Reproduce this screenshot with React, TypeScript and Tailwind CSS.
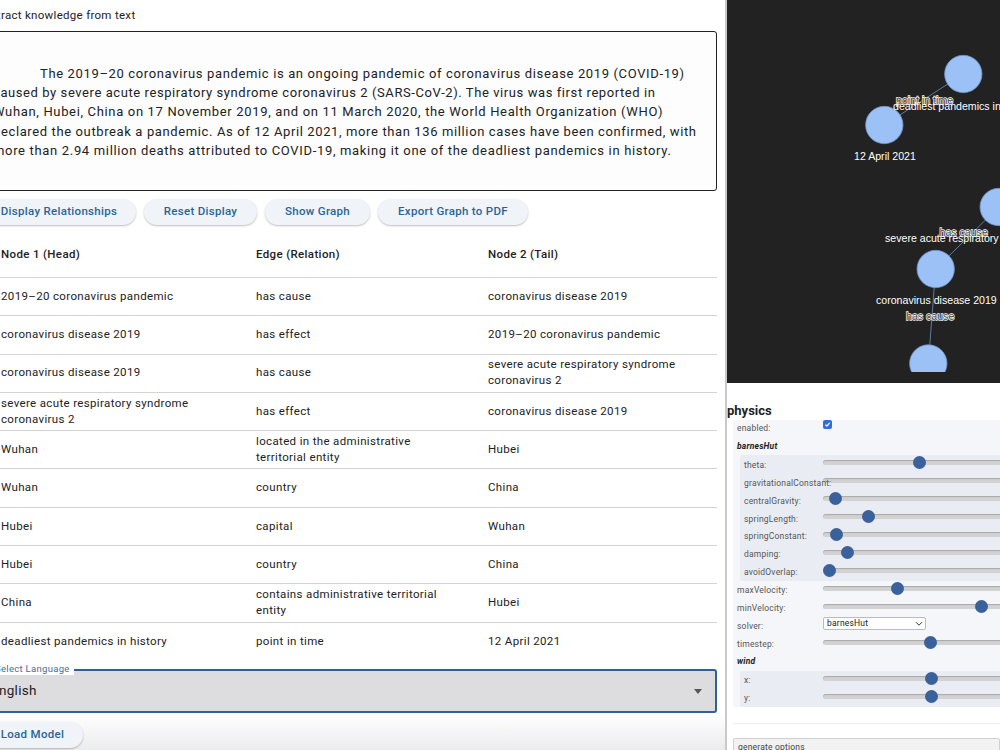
import React from "react";

const rows: [React.ReactNode, React.ReactNode, React.ReactNode][] = [
  ["2019–20 coronavirus pandemic", "has cause", "coronavirus disease 2019"],
  ["coronavirus disease 2019", "has effect", "2019–20 coronavirus pandemic"],
  ["coronavirus disease 2019", "has cause", <>severe acute respiratory syndrome<br />coronavirus 2</>],
  [<>severe acute respiratory syndrome<br />coronavirus 2</>, "has effect", "coronavirus disease 2019"],
  ["Wuhan", <>located in the administrative<br />territorial entity</>, "Hubei"],
  ["Wuhan", "country", "China"],
  ["Hubei", "capital", "Wuhan"],
  ["Hubei", "country", "China"],
  ["China", <>contains administrative territorial<br />entity</>, "Hubei"],
  ["deadliest pandemics in history", "point in time", "12 April 2021"],
];

function Btn({ children, w }: { children: React.ReactNode; w: string }) {
  return (
    <button className={`h-[26px] ${w} shrink-0 rounded-[13px] bg-[#f0f4f8] text-[11.5px] font-medium tracking-[0.3px] text-[#2a6496] shadow-[0_1px_2px_rgba(0,0,0,0.25)]`}>
      {children}
    </button>
  );
}

function Slider({ label, pos, w = "w-[79px]" }: { label: string; pos?: number; w?: string }) {
  return (
    <div className="flex h-[17.97px] items-center">
      <span className={`relative z-10 ${w} shrink-0 translate-y-[1px] whitespace-nowrap text-[8.5px] tracking-[0.2px] text-[#555]`}>{label}</span>
      <div className="relative h-[5px] w-[240px] shrink-0 -translate-y-[1px] rounded-full bg-[#d2d2d2] shadow-[inset_0_1px_1px_rgba(0,0,0,0.2)]">
        {pos !== undefined && (
          <div
            className="absolute top-[-4px] h-[13px] w-[13px] rounded-full bg-[#3b619b]"
            style={{ left: pos - 823 - 6.5 }}
          />
        )}
      </div>
    </div>
  );
}

function Graph() {
  const outlined = "[paint-order:stroke] stroke-white stroke-[1.3px] fill-[#444444]";
  const white = "fill-white";
  const nodes = [
    [963.3, 74],
    [884.3, 125],
    [998.7, 207],
    [935.7, 269],
    [928.3, 363.5],
  ];
  return (
    <svg width="273" height="372" viewBox="727 0 273 372" className="block" fontFamily="'Liberation Sans', Arial, sans-serif" fontSize="10.6">
      <g stroke="#5b7ba3" strokeWidth="1">
        <line x1="963.3" y1="74" x2="884.3" y2="125" />
        <line x1="998.7" y1="207" x2="935.7" y2="269" />
        <line x1="935.7" y1="269" x2="928.3" y2="363.5" />
      </g>
      {nodes.map(([x, y]) => (
        <circle key={x} cx={x} cy={y} r="18.7" fill="#9bc1f6" stroke="#6d8fbf" strokeWidth="0.8" />
      ))}
      <text x="896" y="103.5" className={outlined}>point in time</text>
      <text x="893" y="110" className={white}>deadliest pandemics in history</text>
      <text x="854" y="160" className={white}>12 April 2021</text>
      <text x="939.5" y="236" className={outlined}>has cause</text>
      <text x="885" y="242" className={white}>severe acute respiratory syndrome</text>
      <text x="876" y="304" className={white}>coronavirus disease 2019</text>
      <text x="906" y="319.5" className={outlined}>has cause</text>
    </svg>
  );
}

export default function App() {
  return (
    <div className="flex h-[750px] w-[1000px] overflow-hidden bg-white font-['Roboto','Liberation_Sans',sans-serif]">
      {/* left column */}
      <div className="h-[750px] w-[725px] shrink-0 overflow-hidden bg-gradient-to-b from-white from-[95%] to-[#ececee] pr-[8px]">
        <div className="-ml-[16px] flex w-[733px] flex-col">
          <p className="mt-[8px] h-[23px] text-[11.5px] leading-[15px] tracking-[0.3px] text-[#222]">Extract knowledge from text</p>
          <div className="h-[160px] rounded-[3px] border border-[#222] bg-[#fdfdfe] pl-[8px] pt-[32px] text-[13px] leading-[19.2px] text-[#222] whitespace-nowrap">
            <div className="pl-[47px] tracking-[0.64px]">The 2019–20 coronavirus pandemic is an ongoing pandemic of coronavirus disease 2019 (COVID-19)</div>
            <div className="tracking-[0.58px]">caused by severe acute respiratory syndrome coronavirus 2 (SARS-CoV-2). The virus was first reported in</div>
            <div className="tracking-[0.66px]">Wuhan, Hubei, China on 17 November 2019, and on 11 March 2020, the World Health Organization (WHO)</div>
            <div className="tracking-[0.62px]">declared the outbreak a pandemic. As of 12 April 2021, more than 136 million cases have been confirmed, with</div>
            <div className="tracking-[0.67px]">more than 2.94 million deaths attributed to COVID-19, making it one of the deadliest pandemics in history.</div>
          </div>
          <div className="ml-[-2px] mt-[8px] flex gap-[8px]">
            <Btn w="w-[154px]">Display Relationships</Btn>
            <Btn w="w-[113px]">Reset Display</Btn>
            <Btn w="w-[105px]">Show Graph</Btn>
            <Btn w="w-[150px]">Export Graph to PDF</Btn>
          </div>
          <div className="mt-[7px] pl-[16px] text-[11.5px] leading-[16px] tracking-[0.35px] text-[#222]">
            <div className="grid h-[46px] grid-cols-[255px_232px_1fr] items-center border-b border-[#d4d4d4] pb-[2px] pl-[1px] font-medium">
              <span>Node 1 (Head)</span>
              <span>Edge (Relation)</span>
              <span>Node 2 (Tail)</span>
            </div>
            {rows.map((r, i) => (
              <div key={i} className={`grid h-[38.3px] grid-cols-[255px_232px_1fr] items-center pb-[1.5px] pl-[1px] ${i < rows.length - 1 ? "border-b border-[#d4d4d4]" : ""}`}>
                <span>{r[0]}</span>
                <span>{r[1]}</span>
                <span>{r[2]}</span>
              </div>
            ))}
          </div>
          <div className="relative ml-[8px] mt-[8px] h-[44.5px] rounded-[3px] border-2 border-[#2f6196] bg-[#dddddf]">
            <span className="absolute -top-[8px] left-[-3px] bg-white px-[4px] text-[9.5px] leading-[12px] tracking-[0.3px] text-[#3f6d9f]">Select Language</span>
            <span className="absolute left-[-3px] top-[9px] text-[13.5px] leading-[20px] tracking-[0.3px] text-[#222]">English</span>
            <span className="absolute right-[13px] top-[18px] h-0 w-0 border-x-[4.5px] border-t-[5px] border-x-transparent border-t-[#555]" />
          </div>
          <div className="ml-[-2px] mt-[8px]">
            <Btn w="w-[101px]">Load Model</Btn>
          </div>
        </div>
      </div>

      {/* right column */}
      <div className="relative h-[750px] flex-1 overflow-hidden border-l-2 border-[#c9c9c9] bg-white">
        <div className="h-[383px] bg-[#222222]">
          <Graph />
        </div>
        <h2 className="mt-[20px] h-[16px] text-[13px] font-bold leading-[16px] text-[#222]">physics</h2>
        <div className="ml-[6px] mt-[1px] w-[300px] rounded-[2px] bg-[#f5f6f9] pl-[4px]">
          <div className="flex h-[17px] items-center">
            <span className="w-[86px] text-[8.5px] tracking-[0.2px] text-[#555]">enabled:</span>
            <span className="flex h-[9px] w-[9px] -translate-y-[4px] items-center justify-center rounded-[2px] bg-[#2f6fd6]">
              <svg width="7" height="7" viewBox="0 0 10 10"><path d="M2 5.2 L4.2 7.4 L8 2.8" stroke="white" strokeWidth="1.8" fill="none" /></svg>
            </span>
          </div>
          <div className="flex h-[18px] items-center text-[8.5px] font-bold italic tracking-[0.2px] text-[#222]">barnesHut</div>
          <div className="ml-[3px] rounded-[2px] bg-[#e9edf3] pl-[4px]">
            <Slider label="theta:" pos={919} />
            <Slider label="gravitationalConstant:" />
            <Slider label="centralGravity:" pos={835.5} />
            <Slider label="springLength:" pos={868} />
            <Slider label="springConstant:" pos={836} />
            <Slider label="damping:" pos={847} />
            <Slider label="avoidOverlap:" pos={829.5} />
          </div>
          <Slider w="w-[86px]" label="maxVelocity:" pos={897} />
          <Slider w="w-[86px]" label="minVelocity:" pos={981} />
          <div className="flex h-[18px] items-center">
            <span className="w-[86px] shrink-0 translate-y-[1px] text-[8.5px] tracking-[0.2px] text-[#555]">solver:</span>
            <div className="flex h-[13px] w-[103px] -translate-y-[2px] items-center justify-between rounded-[2px] border border-[#bbb] bg-white pl-[3px] pr-[2px] text-[8.5px] tracking-[0.2px] text-[#222]">
              barnesHut
              <svg width="8" height="6" viewBox="0 0 8 6"><path d="M1 1.2 L4 4.2 L7 1.2" stroke="#333" strokeWidth="1" fill="none" /></svg>
            </div>
          </div>
          <Slider w="w-[86px]" label="timestep:" pos={930} />
          <div className="flex h-[18px] items-center text-[8.5px] font-bold italic tracking-[0.2px] text-[#222]">wind</div>
          <div className="ml-[3px] rounded-[2px] bg-[#e9edf3] pl-[4px]">
            <Slider label="x:" pos={931} />
            <Slider label="y:" pos={931} />
          </div>
        </div>
        <div className="ml-[6px] mt-[16px] h-[1px] bg-[#eeeeee]" />
        <div className="ml-[6px] mt-[14px] h-[30px] rounded-[2px] border border-[#d0d0d0] bg-[#f2f2f2] pl-[4px] pt-[2px] text-[8.5px] tracking-[0.2px] text-[#444]">generate options</div>
      </div>
    </div>
  );
}
